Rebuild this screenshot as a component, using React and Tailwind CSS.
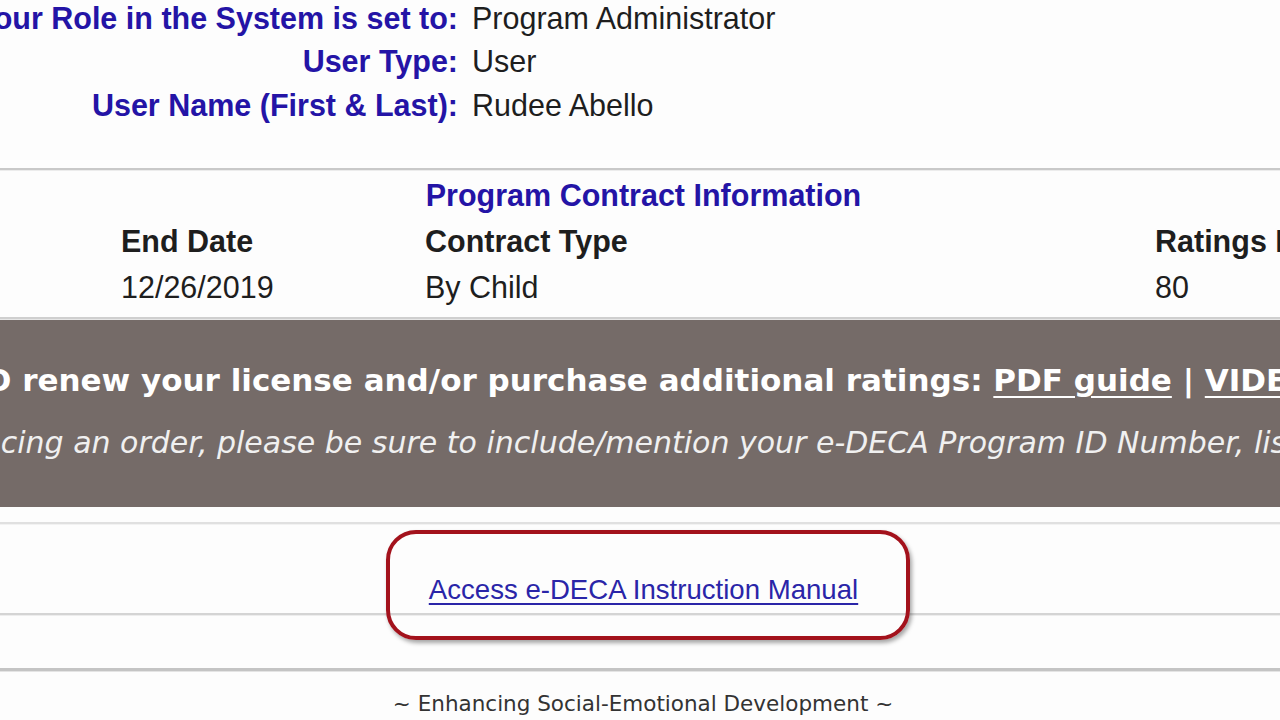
import React from 'react';

const ROWS = [
  { label: 'Your Role in the System is set to:', value: 'Program Administrator' },
  { label: 'User Type:', value: 'User' },
  { label: 'User Name (First & Last):', value: 'Rudee Abello' },
];

const COLS = [
  { head: 'End Date', value: '12/26/2019' },
  { head: 'Contract Type', value: 'By Child' },
  { head: 'Ratings Purchased', value: '80' },
];

export default function App() {
  return (
    <div className="relative w-[1280px] h-[720px] overflow-hidden bg-[#fdfdfd] text-[30.5px] text-[#1e1e1e] font-['Liberation_Sans',Arial,sans-serif]">
      {/* ── Role / user info ── */}
      <div className="-mt-[3px] pb-[3px]">
        {ROWS.map(row => (
          <div key={row.label} className="flex h-[43.5px] items-center whitespace-nowrap">
            <div className="w-[458px] shrink-0 flex justify-end font-bold text-[#2414a6]">
              {row.label}
            </div>
            <div className="pl-[14px]">{row.value}</div>
          </div>
        ))}
      </div>

      <div className="mt-[37px] h-[3px] border-t-2 border-[#c9c9c9] bg-[#ececec]" />

      {/* ── Contract info ── */}
      <div className="whitespace-nowrap pt-[2px]">
        <div className="h-[46px] flex items-center justify-center font-bold text-[#2414a6] pl-[7px]">
          Program Contract Information
        </div>
        <div className="grid grid-cols-[304px_730px_1fr] pl-[121px]">
          {COLS.map(col => (
            <div key={col.head} className="h-[46px] flex items-center font-bold">{col.head}</div>
          ))}
          {COLS.map(col => (
            <div key={col.head + 'v'} className="h-[46px] flex items-center">{col.value}</div>
          ))}
        </div>
      </div>

      <div className="mt-[6px] h-[3px] border-t-2 border-[#cfcfcf] bg-[#e6e6e6]" />

      {/* ── Renewal band ── */}
      <div className="h-[187px] bg-[#756b68] pt-[30px] whitespace-nowrap font-['DejaVu_Sans',Verdana,sans-serif]">
        <div className="h-[62px] flex items-center font-bold text-white text-[31px]">
          <span className="-ml-[15px]">
            O renew your license and/or purchase additional ratings:{' '}
            <span className="underline underline-offset-[5px] decoration-2">PDF guide</span>
            {' | '}
            <span className="underline underline-offset-[5px] decoration-2">VIDEO guide</span>
          </span>
        </div>
        <div className="h-[62px] flex items-center italic text-[#f0f0f0] text-[30px]">
          <span className="-ml-[45px]">
            placing an order, please be sure to include/mention your e-DECA Program ID Number, listed above.
          </span>
        </div>
      </div>

      <div className="h-[15px]" />
      <div className="h-[3px] border-t-2 border-[#e0e0e0] bg-[#f2f2f2]" />

      {/* ── Manual link ── */}
      <div className="h-[88px] flex items-center justify-center text-[27.6px]">
        <a href="#" className="text-[#2a25a8] underline underline-offset-[4px] decoration-[2px] pl-[7px] pt-[43px]">
          Access e-DECA Instruction Manual
        </a>
      </div>

      <div className="h-[3px] border-t-2 border-[#d4d4d4] bg-[#ededed]" />
      <div className="h-[52px]" />
      <div className="h-[4px] border-t-[3px] border-[#c4c4c4] bg-[#e4e4e4]" />

      {/* ── Footer ── */}
      <div className="h-[60px] flex items-start justify-center pt-[16px] text-[21.5px] text-[#333333] pl-[6px] font-['DejaVu_Sans',Verdana,sans-serif]">
        ~ Enhancing Social-Emotional Development ~
      </div>

      {/* ── Red annotation box ── */}
      <div className="absolute left-[386px] top-[530px] w-[524px] h-[110px] rounded-[30px] border-[4px] border-[#a3121c] shadow-[2px_3px_4px_rgba(0,0,0,0.35)]" />
    </div>
  );
}
